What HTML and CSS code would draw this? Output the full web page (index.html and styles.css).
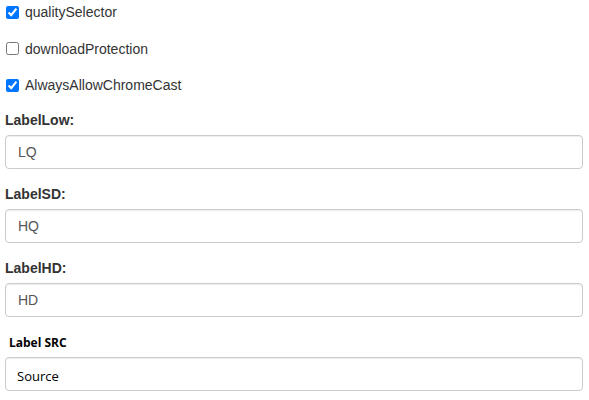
FILE: index.html
```html
<!DOCTYPE html>
<html>
<head>
<meta charset="utf-8">
<link rel="stylesheet" href="styles.css">
</head>
<body>
<div class="form">
  <label class="check"><input type="checkbox" checked> qualitySelector</label>
  <label class="check"><input type="checkbox"> downloadProtection</label>
  <label class="check"><input type="checkbox" checked> AlwaysAllowChromeCast</label>

  <div class="group">
    <label class="lbl">LabelLow:</label>
    <input class="field" type="text" value="LQ">
  </div>
  <div class="group">
    <label class="lbl">LabelSD:</label>
    <input class="field" type="text" value="HQ">
  </div>
  <div class="group">
    <label class="lbl">LabelHD:</label>
    <input class="field" type="text" value="HD">
  </div>
  <div class="group alt">
    <label class="lbl">Label SRC</label>
    <input class="field" type="text" value="Source">
  </div>
</div>
</body>
</html>
```

FILE: styles.css
```css
html, body {
  margin: 0;
  padding: 0;
  background: #fff;
}
body {
  font-family: "Liberation Sans", Arial, Helvetica, sans-serif;
  font-size: 14px;
  line-height: 20px;
  color: #333;
}
.form {
  display: flex;
  flex-direction: column;
  padding: 2px 6px 0 5px;
}
.check {
  display: flex;
  align-items: center;
  height: 20px;
  margin-bottom: 16.5px;
  color: #333;
}
.check input {
  width: 13px;
  height: 13px;
  margin: 0 6px 0 1px;
}
.check:nth-child(3) {
  margin-bottom: 15px;
}
.group {
  display: flex;
  flex-direction: column;
  margin-bottom: 15px;
}
.lbl {
  font-weight: bold;
  height: 20px;
  margin-bottom: 5px;
}
.field {
  box-sizing: border-box;
  height: 34px;
  width: 100%;
  margin: 0;
  padding: 6px 12px;
  font-family: "Liberation Sans", Arial, sans-serif;
  font-size: 14px;
  line-height: 20px;
  color: #555;
  background: #fff;
  border: 1px solid #ccc;
  border-radius: 4px;
  box-shadow: inset 0 1px 1px rgba(0,0,0,0.075);
  outline: none;
}
.alt .lbl {
  font-family: "Open Sans", "Noto Sans", sans-serif;
  font-size: 12px;
  color: #000;
  padding-left: 4px;
  margin-top: 1px;
  margin-bottom: 4px;
}
.alt .field {
  font-family: "Open Sans", "Noto Sans", sans-serif;
  font-size: 13px;
  color: #000;
  padding: 8px 12px 4px 11px;
}
```
